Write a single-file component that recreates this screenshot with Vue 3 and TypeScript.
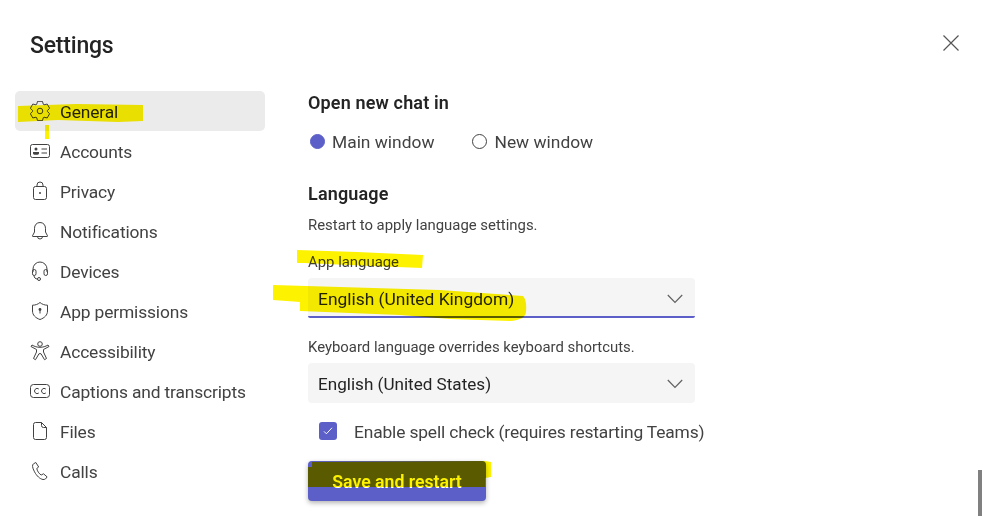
<script setup lang="ts">
function gearPath(): string {
  const pts: string[] = []
  const pt = (r: number, deg: number) => {
    const a = (deg * Math.PI) / 180
    return `${(10 + r * Math.cos(a)).toFixed(2)} ${(10 + r * Math.sin(a)).toFixed(2)}`
  }
  for (let k = 0; k < 6; k++) {
    const c = -90 + 60 * k
    pts.push(`${k === 0 ? 'M' : 'L'}${pt(7.4, c - 27)}`)
    pts.push(`L${pt(10, c - 14)}`)
    pts.push(`L${pt(10, c + 14)}`)
    pts.push(`L${pt(7.4, c + 27)}`)
  }
  return pts.join(' ') + 'Z'
}
const gear = gearPath()
const items: { label: string; icon: string }[] = [
  { label: 'General', icon: 'gear' },
  { label: 'Accounts', icon: 'acc' },
  { label: 'Privacy', icon: 'pri' },
  { label: 'Notifications', icon: 'not' },
  { label: 'Devices', icon: 'dev' },
  { label: 'App permissions', icon: 'per' },
  { label: 'Accessibility', icon: 'a11y' },
  { label: 'Captions and transcripts', icon: 'cc' },
  { label: 'Files', icon: 'fil' },
  { label: 'Calls', icon: 'cal' },
]
</script>

<template>
  <div class="page">
    <header class="head">
      <h1>Settings</h1>
      <svg class="close" viewBox="0 0 16 16" width="16" height="16"><path d="M.5.5l15 15M15.500.5l-15 15" /></svg>
    </header>
    <div class="body">
      <nav class="nav">
        <div v-for="it in items" :key="it.label" class="row" :class="{ active: it.icon === 'gear' }">
          <svg class="ico" viewBox="0 0 20 20" width="20" height="20">
            <template v-if="it.icon === 'gear'">
              <path :d="gear" stroke-linejoin="round" /><circle cx="10" cy="10" r="2.800" />
            </template>
            <template v-else-if="it.icon === 'acc'">
              <rect x="0.500" y="3.500" width="19" height="13" rx="2" />
              <circle cx="6" cy="8" r="1.500" class="fill" />
              <path class="fill" d="M3 11h6v1.200c0 1-1 1.600-3 1.600s-3-.6-3-1.600z" />
              <path d="M11.500 8h5.500M11.500 12h5.500" />
            </template>
            <template v-else-if="it.icon === 'pri'">
              <path d="M7 5.500V4a3 3 0 0 1 6 0v1.500" />
              <rect x="3.500" y="5.500" width="13" height="13" rx="2" />
              <circle cx="10" cy="12" r="1" class="fill" />
            </template>
            <template v-else-if="it.icon === 'not'">
              <path d="M10 1.500c-3.400 0-5.500 2.600-5.500 5.800v3.700l-2 3.800c-.2.400 0 .7.400.7h14.200c.4 0 .6-.3.400-.7l-2-3.800V7.300c0-3.200-2.100-5.800-5.500-5.800z" />
              <path d="M7.500 15.500a2.500 2.500 0 0 0 5 0" />
            </template>
            <template v-else-if="it.icon === 'dev'">
              <path d="M3 11V8a7 7 0 0 1 14 0v3" />
              <rect x="2.500" y="8.500" width="3.500" height="6" rx="1.700" />
              <rect x="14" y="8.500" width="3.500" height="6" rx="1.700" />
              <path d="M4 14.500c0 2.200 1.500 3.500 3.500 3.500" />
              <circle cx="9" cy="18" r="1.500" />
            </template>
            <template v-else-if="it.icon === 'per'">
              <path d="M10 1.500c2 1.800 4.700 2.700 7.500 2.700V10c0 4-3 7-7.500 8.500C5.500 17 2.500 14 2.500 10V4.200c2.800 0 5.500-.9 7.500-2.700z" />
              <circle cx="10" cy="8.500" r="1.400" class="fill" />
              <path d="M10 9v3.500" />
            </template>
            <template v-else-if="it.icon === 'a11y'">
              <circle cx="10" cy="3" r="2.300" />
              <path d="M1 5.500l1-1.500c2.500 1.500 5 2.300 8 2.300S15.500 5.500 18 4l1 1.500L13.500 8.500v2.500l3 6.500-2 1.200-3.500-6h-2l-3.500 6-2-1.200 3-6.500V8.500z" stroke-linejoin="round" />
            </template>
            <template v-else-if="it.icon === 'cc'">
              <rect x="0.500" y="3.500" width="19" height="13" rx="3" />
              <path d="M8.800 8a2.600 2.600 0 1 0 0 4M15.800 8a2.600 2.600 0 1 0 0 4" />
            </template>
            <template v-else-if="it.icon === 'fil'">
              <path d="M3.500 3.500a2 2 0 0 1 2-2h6l5 5v10a2 2 0 0 1-2 2h-9a2 2 0 0 1-2-2z" />
              <path d="M11.500 1.500v3a2 2 0 0 0 2 2h3" />
            </template>
            <template v-else>
              <path d="M5.800 1.500 3.500 2.800C2 3.800 2.200 6.500 4.500 10.800S10 18 13 18.500c1.800.3 3.500-1 4-2.700l-3.500-3-2.300 1.200c-2-1-4.200-4.300-4.400-6.600l1.900-1.400z" stroke-linejoin="round" />
            </template>
          </svg>
          <span class="lbl">{{ it.label }}</span>
        </div>
      </nav>
      <main class="main">
        <h2 class="first">Open new chat in</h2>
        <div class="radios">
          <label class="radio"><i class="dot on"></i>Main window</label>
          <label class="radio"><i class="dot"></i>New window</label>
        </div>
        <h2 class="lang">Language</h2>
        <p class="hint">Restart to apply language settings.</p>
        <p class="lab1">App language</p>
        <div class="select focus">
          <span>English (United Kingdom)</span>
          <svg viewBox="0 0 16 10" width="16" height="10"><path d="M.8 1l7.200 7.500L15.200 1" /></svg>
        </div>
        <p class="lab2">Keyboard language overrides keyboard shortcuts.</p>
        <div class="select">
          <span>English (United States)</span>
          <svg viewBox="0 0 16 10" width="16" height="10"><path d="M.8 1l7.200 7.500L15.200 1" /></svg>
        </div>
        <label class="check">
          <i class="box"><svg viewBox="0 0 12 10" width="10" height="8"><path d="M1 5.500l3 3L11 1" /></svg></i>
          Enable spell check (requires restarting Teams)
        </label>
        <button class="save">Save and restart</button>
      </main>
    </div>
    <div class="scroll"></div>
    <svg class="marks" viewBox="0 0 982 516" width="982" height="516">
      <path d="M18 106l58-2 67 1 0 16-25 1-60-2-40 2z" />
      <rect x="45" y="125" width="4" height="14" />
      <path d="M297 250l60 2 66 3-1 13-50-2-68-3-7 0z" />
      <path d="M273 285L440 290L523 296Q527 300 526 312Q525 320 510 321L450 319L400 315L300 311L300 302L273 300Z" />
      <path d="M312 462l173-1 6 1v15l-6 1v9l-177 0v-20h4z" />
    </svg>
  </div>
</template>

<style>
html, body { margin: 0; padding: 0; background: #fff; }
</style>

<style scoped>
.page {
  position: relative;
  width: 982px;
  height: 516px;
  overflow: hidden;
  background: #fff;
  color: #242424;
  font-family: Roboto, "Open Sans", sans-serif;
  isolation: isolate;
}
.head {
  display: flex;
  justify-content: space-between;
  align-items: center;
  height: 28px;
  padding: 31px 23px 0 30px;
}
h1 { margin: 0; font-size: 23px; font-weight: 500; letter-spacing: -0.200px; }
.close { align-self: flex-start; margin-top: 4px; }
.close path { stroke: #555; stroke-width: 1.200; fill: none; }
.body { display: flex; margin-top: 32px; padding-left: 15px; }
.nav { width: 250px; display: flex; flex-direction: column; }
.row {
  display: flex;
  align-items: center;
  gap: 10px;
  height: 40px;
  padding-left: 15px;
  border-radius: 5px;
  font-size: 17.400px;
  letter-spacing: -0.150px;
  color: #424242;
}
.lbl { padding-top: 2px; }
.row.active { background: #ebebeb; color: #242424; }
.ico { flex: none; }
.ico path, .ico rect, .ico circle { fill: none; stroke: #424242; stroke-width: 1; }
.ico .fill { fill: #424242; stroke: none; }
.main { margin-left: 43px; width: 387px; display: flex; flex-direction: column; align-items: flex-start; }
h2 { margin: 0; font-size: 18px; font-weight: 600; line-height: 22px; letter-spacing: 0.150px; }
.first { margin-top: 1px; }
.radios { display: flex; gap: 36px; margin-top: 16px; height: 24px; align-items: center; }
.radio { display: flex; align-items: center; gap: 7px; font-size: 17.400px; color: #424242; }
.dot { box-sizing: border-box; width: 15px; height: 15px; border: 1px solid #424242; border-radius: 50%; margin: 0 0 1px 2px; }
.dot.on { background: #5b5fc7; border-color: #5b5fc7; }
.lang { margin-top: 29px; }
.hint, .lab1, .lab2 { margin: 0; font-size: 14.900px; line-height: 20px; color: #424242; }
.hint { margin-top: 10px; }
.lab1 { margin-top: 17px; }
.lab2 { margin-top: 19px; }
.select {
  box-sizing: border-box;
  width: 387px;
  height: 40px;
  display: flex;
  align-items: center;
  justify-content: space-between;
  padding: 1px 12px 0 10px;
  margin-top: 6px;
  background: #f5f5f5;
  border-radius: 4px;
  font-size: 17.100px;
  color: #242424;
}
.select.focus { border-bottom: 2px solid #5b5fc7; border-radius: 4px 4px 2px 2px; padding-top: 3px; font-size: 17.400px; }
.select svg path { fill: none; stroke: #616161; stroke-width: 1.200; }
.check { display: flex; align-items: center; gap: 17px; margin: 18px 0 0 11px; font-size: 17.400px; letter-spacing: -0.150px; color: #424242; height: 22px; white-space: nowrap; }
.box { width: 18px; height: 18px; margin-bottom: 2px; border-radius: 3px; background: #5b5fc7; display: flex; align-items: center; justify-content: center; }
.box path { fill: none; stroke: #fff; stroke-width: 1.200; }
.save {
  width: 178px;
  height: 40px;
  margin-top: 18px;
  padding: 2px 0 0;
  border: 0;
  border-radius: 4px;
  background: #5b5fc7;
  color: #fff;
  font: 600 17.700px Roboto, sans-serif;
  box-shadow: 0 2px 5px rgba(0, 0, 0, .3);
}
.scroll { position: absolute; right: 0; top: 470px; width: 4px; height: 46px; background: #808080; }
.marks { position: absolute; inset: 0; mix-blend-mode: multiply; pointer-events: none; }
.marks path, .marks rect { fill: #fdf200; }
</style>
